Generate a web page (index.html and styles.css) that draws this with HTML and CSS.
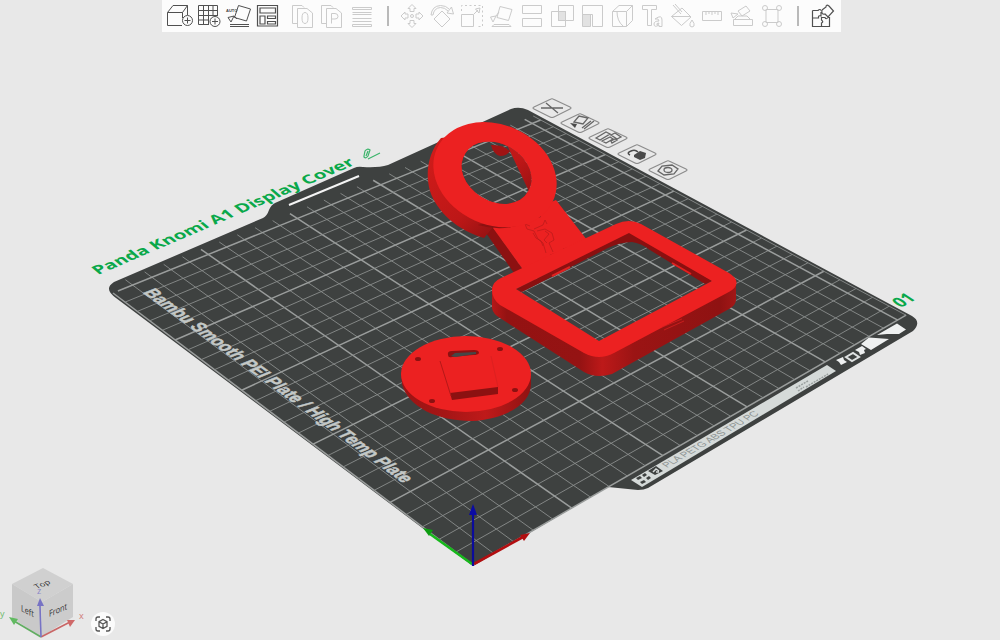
FILE: index.html
```html
<!DOCTYPE html>
<html lang="en">
<head>
<meta charset="utf-8">
<meta name="viewport" content="width=device-width, initial-scale=1">
<title>Panda Knomi A1 Display Cover</title>
<link rel="stylesheet" href="styles.css">
</head>
<body>
<main class="stage">
<svg class="scene" viewBox="0 0 1000 640" role="img" aria-label="Build plate with model parts">
  <defs>
    <linearGradient id="ringSide" x1="0" y1="0" x2="1" y2="1">
      <stop offset="0.1" stop-color="#cf1c1a"/><stop offset="0.55" stop-color="#bd1717"/><stop offset="0.9" stop-color="#7d0f10"/>
    </linearGradient>
    <linearGradient id="frameSide" x1="492" y1="0" x2="737" y2="0" gradientUnits="userSpaceOnUse">
      <stop offset="0" stop-color="#b51818"/><stop offset="0.06" stop-color="#941212"/><stop offset="0.36" stop-color="#951313"/>
      <stop offset="0.45" stop-color="#bd1919"/><stop offset="0.58" stop-color="#9b1414"/><stop offset="0.93" stop-color="#8f1212"/><stop offset="1" stop-color="#a51717"/>
    </linearGradient>
    <linearGradient id="discSide" x1="0" x2="1">
      <stop offset="0" stop-color="#9c1414"/><stop offset="0.35" stop-color="#a51616"/><stop offset="0.65" stop-color="#bf1a1a"/><stop offset="1" stop-color="#8f1212"/>
    </linearGradient>
  </defs>

  <path class="plate" d="M473 566 L116 298 Q103 289 114 282 L263 218 Q267 216 269 210 Q271 205 275 203 L354 168 Q358 166 363 167 Q378 168 388 165 L511 109 Q519 106 528 110 L912 316 Q922 322 913 331 L648 488 Q644 490 638 490 L608 487 Z"/>
  <g id="grid"></g>
  <path class="slit" d="M289 205 L359 176"/>

  <path class="strip" d="M631 480 L827 365 L836 371 L642 487 Z"/>
  <g class="strip-mark">
    <path class="mark-white" d="M877 335 L897 323.500 L906 329.500 L899 334 L887 334 Z M861 344 L869 337.500 L889 339 L871 350 Z"/>
    <path class="mark-white" d="M836 360 L843 357 L844 360 L847 362 L841 365 L839 362 Z M855 350 L862 346 L866 349 L864 350 L865 353 L860 355 L859 352 Z"/>
    <path class="mark-outline" d="M846 357 L853 353 L859 357 L852 361 Z"/>
    <path class="mark-dark" d="M636 478 l4 -2 l2 2 l-4 2z M642 475 l3 -2 l2 2 l-3 2z M640 482 l4 -2 l2 2 l-4 2z M646 478 l3 -2 l2 2 l-3 2z M648 471 l8 -5 l7 5 l-8 4z"/>
    <path class="mark-light" d="M653 472 l3 -3 l3 2 M656 472 l3 0"/>
    <path class="tiny" d="M796 388 L808 381 M798 391 L804 387 M806 387 L828 374"/>
  </g>
  <text class="material" transform="matrix(1.69 -0.98 1.73 1.09 667 468)">PLA PETG ABS TPU PC</text>
  <text class="plate-name" transform="matrix(1.41 1.03 -1.7 1 143 293)">Bambu Smooth PEI Plate / High Temp Plate</text>
  <text class="title" transform="matrix(1.7 -0.73 1.15 1 98 275)">Panda Knomi A1 Display Cover</text>
  <text class="title" transform="matrix(1.37 -0.78 1.5 1 901 308)">01</text>

  <!-- neck -->
  <path fill="#8c1111" d="M486 233 L493 227 L524 271 L514 273 Z"/>
  <path fill="#ec2121" d="M493 228 Q495 223 503 222 L556 200 L587 240 L590 246 L524 271 Z"/>
  <g class="engrave">
    <path d="M530 226 l-5 -2 l2 5 l7 2 l4 8 l5 4 l3 10 M534 229 l9 -4 l2 -5 l2 4 M537 231 l8 -2 l7 4 l2 7 l-5 3 l4 9 M545 231 l4 3 l-5 6 l3 3 M533 233 l3 5 l5 3 l2 5"/>
    <path d="M550 255 l10 -3 M563 249 l4 -1 M571 246 l7 -2"/>
  </g>

  <!-- ring -->
  <path fill="url(#ringSide)" fill-rule="evenodd" d="M441 138 C428 153 425 173 430 191 C437 212 457 230 484 238 L493 227 L541 217 L500 130 Z M527.800 191.800 A36.700 27.500 31.400 1 0 465.200 153.600 A36.700 27.500 31.400 1 0 527.800 191.800 Z"/>
  <path fill="#8c1111" d="M478 225 Q508 234 535 218 Q550 208 555 190 L550 188 L530 205 L500 220 Z"/>
  <path fill="#ec2121" fill-rule="evenodd" d="M553.200 200.600 A63.700 50.100 24 1 1 436.800 148.800 A63.700 50.100 24 1 1 553.200 200.600 Z M527.800 191.800 A36.700 27.500 31.400 1 0 465.200 153.600 A36.700 27.500 31.400 1 0 527.800 191.800 Z"/>
  <path fill="#a01414" d="M491 145 Q502 144 510 151 Q507 156 500 156 Q493 154 491 145 Z"/>

  <!-- frame -->
  <path fill="url(#frameSide)" d="M492 287 L492 308 Q493 314 500 318 L584 372 Q596 379 612 374 L729 309 Q736 305 736 300 L736 280 L600 352 Z"/>
  <path fill="#8a1010" d="M516 289 L629 232 L713 281 L705 284 L650 250 Q641 243 632 242 Q620 242 608 248 L522 292 Z"/>
  <path fill="#ec2121" fill-rule="evenodd" d="M492 290 Q492 282 501 278 L616 224 Q629 218 641 224 L729 273 Q740 280 735 287 Q733 290 727 293 L614 353 Q599 361 584 353 L500 305 Q492 299 492 290 Z M516 289 L599 341 L712 281 L629 233 Z"/>
  <path class="slot-edge" d="M552 276 L570 267 M672 263 L691 274"/>
  <path class="slot-line" d="M662 327 L682 319 M664 330 L684 321"/>

  <!-- disc -->
  <path fill="url(#discSide)" d="M401 372 L402 384 C408 407 437 421 472 421 C506 419 531 404 531 384 L531 374 Z"/>
  <ellipse fill="#ec2121" cx="466" cy="374" rx="65" ry="38"/>
  <g fill="#8c1111">
    <ellipse cx="418" cy="359" rx="3" ry="2"/><ellipse cx="500" cy="349" rx="3" ry="2"/>
    <ellipse cx="515" cy="390" rx="3" ry="2"/><ellipse cx="432" cy="401" rx="3" ry="2"/>
    <path d="M448 355 Q447 351 452 351 L474 350 Q479 350 479 353 Q478 355 473 355 L452 357 Q448 358 448 355 Z"/>
    <path d="M450 393 L498 387 L498 394 L452 400 Z"/>
  </g>
  <path fill="#454747" d="M451 356 L455 353 L476 352 L476 354 L455 357 Z"/>
  <path fill="none" stroke="#b51818" d="M440 361 L451 396"/>
  <path fill="none" stroke="#dc2020" d="M491 356 L498 387"/>

  <!-- origin axes -->
  <path stroke="#17b81c" stroke-width="2.600" d="M472 564 L430 534"/>
  <path fill="#0c9c10" d="M423 528 L433 530 L429 536 Z"/>
  <path stroke="#b20e10" stroke-width="2.600" d="M474 564 L523 537"/>
  <path fill="#b20e10" d="M530 533 L520 535 L524 541 Z"/>
  <path stroke="#0b0b9c" stroke-width="2.200" d="M473 566 L473 514"/>
  <path fill="#0b0ba4" d="M473 504 L477 515 L469 515 Z"/>

  <!-- view cube -->
  <path fill="#d0d0d0" d="M12 584 L43 568 L73 584 L42 602 Z"/>
  <path fill="#c9c9c9" d="M12 584 L42 602 L41 637 L12 618 Z"/>
  <path fill="#cccccc" d="M42 602 L73 584 L73 617 L41 637 Z"/>
  <text class="face" transform="matrix(0.9 -0.35 0.6 0.6 37 589)">Top</text>
  <text class="face" transform="matrix(0.8 0.4 0 1 21 611)">Left</text>
  <text class="face" transform="matrix(0.8 -0.35 0 1 49 617)">Front</text>
  <g fill="none" stroke-width="1.600">
    <path stroke="#61ad61" d="M41 637 L14 621"/><path stroke="#c96666" d="M41 637 L70 622"/><path stroke="#7773c4" d="M41 637 L40 606"/>
  </g>
  <path fill="#61ba61" d="M9 617 L18 619 L14 625 Z"/>
  <path fill="#cf6969" d="M75 620 L67 620 L70 627 Z"/>
  <path fill="#7773c4" d="M40 598 L44 606 L37 606 Z"/>
  <text class="axis axis-x" x="79" y="619">x</text>
  <text class="axis axis-y" x="0" y="617">y</text>
  <text class="axis axis-z" x="37" y="594">z</text>
</svg>

<button class="plate-btn edit" aria-label="Rename plate"><svg viewBox="0 0 20 14"><path d="M3 9 L4 4 Q6 1 9 3 L7 9 Q5 12 3 10 Z M5 9 L7 4 M7 12 L19 6"/></svg></button>
<button class="plate-btn b1" aria-label="Delete all"><svg viewBox="-20 -10 40 20"><path d="M-18 -1 L-1 -9 Q0 -9.500 1 -9 L18 -1 Q20 0 18 1 L2 9 Q0 10 -2 9 L-18 1 Q-20 0 -18 -1 Z"/><path class="dark" d="M-11 0 L11 0 M-6 -5 L6 5"/></svg></button>
<button class="plate-btn b2" aria-label="Auto orient"><svg viewBox="-20 -10 40 20"><path d="M-18 -1 L-1 -9 Q0 -9.500 1 -9 L18 -1 Q20 0 18 1 L2 9 Q0 10 -2 9 L-18 1 Q-20 0 -18 -1 Z"/><path class="dark" d="M-6 -1 L-1 -7 L8 -5 L3 1 Z M4 6 L14 -2 M2 5 L11 -2"/><path class="solid" d="M-10 0 L-3 1 L-5 5 Z"/></svg></button>
<button class="plate-btn b3" aria-label="Arrange"><svg viewBox="-20 -10 40 20"><path d="M-18 -1 L-1 -9 Q0 -9.500 1 -9 L18 -1 Q20 0 18 1 L2 9 Q0 10 -2 9 L-18 1 Q-20 0 -18 -1 Z"/><path class="dark" d="M-12 0 L-2 -6 L2 -4 L-8 2 Z M-6 3 L2 -1 L5 1 L-2 5 Z M3 -3 L7 -5 L13 -1 L9 1 Z M3 3 L7 1 L9 2 L4 5 Z"/></svg></button>
<button class="plate-btn b4" aria-label="Lock plate"><svg viewBox="-20 -10 40 20"><path d="M-18 -1 L-1 -9 Q0 -9.500 1 -9 L18 -1 Q20 0 18 1 L2 9 Q0 10 -2 9 L-18 1 Q-20 0 -18 -1 Z"/><path class="lock" d="M-7 1 Q-11 -1 -6 -3 Q-2 -5 1 -2"/><path class="solid" d="M-3 1 L3 -3 L9 -1 L8 4 L3 6 L-3 3 Z"/></svg></button>
<button class="plate-btn b5" aria-label="Plate settings"><svg viewBox="-20 -10 40 20"><path d="M-18 -1 L-1 -9 Q0 -9.500 1 -9 L18 -1 Q20 0 18 1 L2 9 Q0 10 -2 9 L-18 1 Q-20 0 -18 -1 Z"/><path class="dark" d="M-10 1 L-6 -4 L4 -5 L10 -1 L6 4 L-4 5 Z"/><ellipse class="dark" rx="4" ry="2.500"/></svg></button>
<button class="fit-view" aria-label="Fit camera to scene"><svg viewBox="0 0 24 24"><path d="M5 9 V7 Q5 5 7 5 H9 M15 5 H17 Q19 5 19 7 V9 M19 15 V17 Q19 19 17 19 H15 M9 19 H7 Q5 19 5 17 V15"/><path d="M12 7.500 L16 9.700 V14.300 L12 16.500 L8 14.300 V9.700 Z M8 9.700 L12 12 L16 9.700 M12 12 V16.500"/></svg></button>
</main>

<header class="toolbar-row">
<div class="toolbar" role="toolbar" aria-label="Tools">
  <div class="group tight">
    <button aria-label="Add"><svg viewBox="0 0 28 28"><path d="M16 23.500 H1.500 V10.500 H16.500 V16 M1.500 10.500 L7 3.500 H21.500 V13 M16.500 10.500 L21.500 3.500"/><circle cx="21.500" cy="18.500" r="5"/><path d="M18.500 18.500 H24.500 M21.500 15.500 V21.500"/></svg></button>
    <button aria-label="Add plate"><svg viewBox="0 0 28 28"><path d="M14 22.500 H3.500 V3.500 H22.500 V14 M3.500 8.500 H22.500 M3.500 13.500 H22.500 M3.500 18 H14 M8.500 3.500 V22.500 M13.500 3.500 V22.500 M18 3.500 V14"/><circle cx="20" cy="19.500" r="5"/><path d="M17 19.500 H23 M20 16.500 V22.500"/></svg></button>
    <button aria-label="Auto orient"><svg viewBox="0 0 28 28"><path d="M14.500 3.500 L26.500 7 L22.500 19 L10.500 15.500 Z M4 15.500 L10 14 L7 20 Z M10 14 L13 17 M6 24.500 H25 M6 22.500 H25"/><text class="auto" x="2" y="10">AUTO</text></svg></button>
    <button aria-label="Arrange"><svg viewBox="0 0 28 28"><path class="mid" d="M4.500 3.500 H24.500 V24 H4.500 Z M7 6 H22.500 V11 H7 Z M7 14 H12 V22 H7 Z M14.500 14 H22.500 V16.500 H14.500 Z M14.500 19.500 H22.500 V22 H14.500 Z"/></svg></button>
  </div>
  <div class="group off">
    <button disabled aria-label="Split to objects"><svg viewBox="0 0 28 28"><path d="M9 21.500 H4.500 V3.500 H14 L16 5.500 M9.500 6.500 H19 L24.500 11 V25.500 H9.500 Z M17 10.500 Q20 10.500 20 16 Q20 21.500 17 21.500 Q14 21.500 14 16 Q14 10.500 17 10.500 Z"/></svg></button>
    <button disabled aria-label="Split to parts"><svg viewBox="0 0 28 28"><path d="M8 21.500 H3.500 V3.500 H13 L15 5.500 M8.500 6.500 H18 L23.500 11 V25.500 H8.500 Z M13.500 21.500 V11.500 H17 Q20 11.500 20 14.500 Q20 17 17 17 H13.500"/></svg></button>
    <button disabled aria-label="Variable layer height"><svg viewBox="0 0 28 28"><path d="M4.500 5.500 H23.500 V7.500 H4.500 Z M4.500 10.500 H23.500 M4.500 12.500 H23.500 M4.500 16.500 H23.500 M4.500 19.500 H23.500 M4.500 22.500 H23.500 V24.500 H4.500 Z"/></svg></button>
  </div>
  <span class="sep"></span>
  <div class="group off">
    <button disabled aria-label="Move"><svg viewBox="0 0 28 28"><path d="M14 2.500 L18 6.500 H16 V9.500 H12 V6.500 H10 Z M14 25.500 L18 21.500 H16 V18.500 H12 V21.500 H10 Z M3 14 L7 10 V12 H10 V16 H7 V18 Z M25 14 L21 10 V12 H18 V16 H21 V18 Z"/><circle cx="14" cy="14" r="1.500"/></svg></button>
    <button disabled aria-label="Rotate"><svg viewBox="0 0 28 28"><path d="M14 9 L22 17 L14 25 L6 17 Z M3 13 Q4 4 12.500 3.500 Q18 3.500 21 7 M19 11 L25.500 12 L23.500 5 Z M3 13 H5 Q6 6 12.500 5.500 Q17 5.500 20 9"/></svg></button>
    <button disabled aria-label="Scale"><svg viewBox="0 0 28 28"><path d="M3.500 12.500 H15.500 V24.500 H3.500 Z M16 12 L20 8 M17.500 7 L22 6 L21 11 Z"/><path stroke-dasharray="2 2.500" d="M3.500 9 V3.500 H24.500 V24.500 H18"/></svg></button>
    <button disabled aria-label="Lay on face"><svg viewBox="0 0 28 28"><path d="M12 4.500 L24 7.500 L20.500 18.500 L9 15.500 Z M2.500 15 L8 14 L5 20 Z M8 14 L11 10 M4 24.500 L6 22.500 H21 L23 24.500 Z"/></svg></button>
    <button disabled aria-label="Cut"><svg viewBox="0 0 28 28"><path d="M4.500 11.500 V3.500 H23.500 V11.500 Z M4.500 16.500 H23.500 V24.500 H4.500 Z"/></svg></button>
    <button disabled aria-label="Mesh boolean"><svg viewBox="0 0 28 28"><path class="shade" d="M10.500 9.500 H17.500 V18.500 H10.500 Z"/><path d="M3.500 9.500 H17.500 V24.500 H3.500 Z M10.500 3.500 H25.500 V18.500 H10.500 Z"/></svg></button>
    <button disabled aria-label="Support painting"><svg viewBox="0 0 28 28"><path class="shade" d="M4.500 12.500 H12.500 V24.500 H4.500 Z"/><path d="M4.500 12.500 V3.500 H24.500 V24.500 H14.500 V12.500 Z"/></svg></button>
    <button disabled aria-label="Seam painting"><svg viewBox="0 0 28 28"><path d="M4.500 9.500 H18.500 V24.500 H4.500 Z M4.500 9.500 L11 3.500 H24.500 V18.500 L18.500 24.500 M18.500 9.500 L24.500 3.500 M9 9.500 Q9 19 15 24"/></svg></button>
    <button disabled aria-label="Text shape"><svg viewBox="0 0 28 28"><path d="M4.500 3.500 H18.500 V7.500 H13.500 V23.500 H9.500 V7.500 H4.500 Z M17 17 Q24 12 24 18 V24.500 H21 V23 Q16 26 16 22 Q16 19 21 19 Q21 16 17 17 M21 21 Q18 21 19 23 Q21 23 21 21"/></svg></button>
    <button disabled aria-label="Color painting"><svg viewBox="0 0 28 28"><path d="M3.500 14.500 L14 6 L23 15 L13.500 23.500 Z M3.500 14.500 H23 M5 3 L13 12 M7 2 L14 10 M24 18 Q21 22 22 24 Q24 26 26 24 Q27 22 24 18 Z"/></svg></button>
    <button disabled aria-label="Measure"><svg viewBox="0 0 28 28"><path d="M4.500 9.500 H23.500 V18.500 H4.500 Z M8 10 V13 M11 10 V12 M14 10 V13 M17 10 V12 M20 10 V13"/></svg></button>
    <button disabled aria-label="Assemble"><svg viewBox="0 0 28 28"><path d="M5.500 17.500 H24.500 V23.500 H5.500 Z M10 9 L18 4 L22 9 L14 14 Z M3 11 L10 12 L5 16 Z M7 17 L10 14 H19 L22 17"/></svg></button>
    <button disabled aria-label="Cut connectors"><svg viewBox="0 0 28 28"><path d="M8 7.500 H20 V20.500 H8 Z"/><circle cx="7" cy="6" r="2.500"/><circle cx="21" cy="6" r="2.500"/><circle cx="7" cy="22" r="2.500"/><circle cx="21" cy="22" r="2.500"/></svg></button>
  </div>
  <span class="sep"></span>
  <div class="group">
    <button aria-label="Assembly view"><svg viewBox="0 0 28 28"><path class="mid" d="M4.500 8.500 H10 Q12 6.500 13 8.500 M13 10 V14 Q10 13 10.500 16 H4.500 V8.500 M4.500 16 V24.500 H13.500 V21 Q16 20 13.500 18 V15.500 H17 Q18 18 20 15.500 H21.500 V24.500 H13.500 M14 8 L18 5 Q18 2 21 4 L25.500 9 L20 15 L17 12 Q13 13 14 8"/></svg></button>
  </div>
</div>
</header>
<script src="grid.js"></script>
</body>
</html>
```
FILE: styles.css
```css
* { box-sizing: border-box; }
body {
  margin: 0;
  min-height: 100vh;
  overflow: hidden;
  background: #e8e8e8;
  font-family: "Open Sans", "Liberation Sans", sans-serif;
}
button {
  padding: 0;
  border: 0;
  background: none;
  color: inherit;
}
.toolbar-row {
  position: absolute;
  top: 0;
  left: 0;
  right: 0;
  display: flex;
  justify-content: center;
  padding-left: 3px;
}
.toolbar {
  display: flex;
  align-items: center;
  padding: 0 4px 0 3px;
  background: #fcfcfc;
  color: #505050;
}
.group { display: flex; }
.group.tight { margin-right: 6px; }
.group.off { color: #cbcbcb; }
.group button {
  display: flex;
  align-items: center;
  justify-content: center;
  width: 30px;
  height: 32px;
}
.group.tight button { width: 29px; }
.group svg {
  flex: none;
  width: 28px;
  height: 28px;
  fill: none;
  stroke: currentColor;
  stroke-width: 1;
  overflow: visible;
}
.group .mid { stroke-width: 1.2; }
.group .shade { fill: #e2e2e2; }
.group .auto {
  font: bold 4px "Liberation Sans", sans-serif;
  fill: #444;
  stroke: none;
}
.sep {
  width: 2px;
  height: 20px;
  margin: 0 8px 0 10px;
  background: #b9b9b9;
}
.stage {
  position: relative;
  width: min(100vw, 156.25vh);
  aspect-ratio: 25 / 16;
  margin: 0 auto;
}
.scene {
  display: block;
  width: 100%;
  height: 100%;
}
.plate { fill: #3e4140; }
.line { stroke: #8a8d8c; stroke-width: 0.9; }
.line.major { stroke: #9a9d9c; stroke-width: 1.5; }
.slit { stroke: #f4f4f4; stroke-width: 2; }
.strip { fill: #d5dad9; }
.mark-white { fill: #eef0f0; }
.mark-outline { fill: none; stroke: #dfe2e2; stroke-width: 2; }
.mark-dark { fill: #3e4140; }
.mark-light { fill: none; stroke: #d5dad9; stroke-width: 1.5; }
.tiny { stroke: #9aa09f; stroke-width: 1.5; stroke-dasharray: 2 1; }
.material {
  font: 5px "Liberation Sans", sans-serif;
  fill: #8d9392;
}
.plate-name {
  font: italic bold 9px "Liberation Sans", sans-serif;
  fill: #c3c8c7;
  stroke: #c3c8c7;
  stroke-width: 0.3;
}
.title {
  font: bold 10px "Open Sans", sans-serif;
  fill: #0aa84a;
}
.engrave { fill: none; stroke: #b81a1a; stroke-width: 0.7; }
.slot-edge { stroke: #e02020; stroke-width: 2; }
.slot-line { stroke: #d42020; stroke-width: 0.8; }
.face {
  font: 9px "Open Sans", sans-serif;
  fill: #333;
}
.axis { font: 9px "Open Sans", sans-serif; }
.axis-x { fill: #cf7777; }
.axis-y { fill: #6cb86c; }
.axis-z { fill: #8a86c8; }
.plate-btn {
  position: absolute;
  width: 4%;
  transform: translate(-50%, -50%);
}
.plate-btn svg {
  display: block;
  width: 100%;
  fill: none;
  stroke: #8c8c8c;
  stroke-width: 1.2;
}
.plate-btn .dark { stroke: #666; stroke-width: 1.3; }
.plate-btn .solid { fill: #4a4a4a; stroke: none; }
.plate-btn .lock { stroke: #4a4a4a; stroke-width: 1.6; }
.plate-btn.edit { left: 37.1%; top: 24%; width: 2%; }
.plate-btn.edit svg { stroke: #3db56c; }
.b1 { left: 55.2%; top: 16.9%; }
.b2 { left: 58%; top: 19.2%; }
.b3 { left: 60.8%; top: 21.6%; }
.b4 { left: 63.7%; top: 24.1%; }
.b5 { left: 66.8%; top: 26.6%; }
.fit-view {
  position: absolute;
  left: 91px;
  bottom: 4px;
  width: 24px;
  height: 24px;
  border-radius: 50%;
  background: #fbfbfb;
}
.fit-view svg {
  display: block;
  width: 24px;
  height: 24px;
  fill: none;
  stroke: #555;
  stroke-width: 1.3;
}
```
FILE: grid.js
```js
// Projects plate coordinates (in units of 50 mm) to the drawing.
function project(u, v) {
  const d = 1 + 0.0425 * u + 0.0397 * v;
  return [473 + (103 * u - 86.3 * v) / d, 565 - (59.4 * u + 65.2 * v) / d];
}

const grid = document.getElementById("grid");
const END = 5.12;

function addLine(from, to, major) {
  const [x1, y1] = project(...from);
  const [x2, y2] = project(...to);
  const line = document.createElementNS("http://www.w3.org/2000/svg", "line");
  Object.entries({ x1, y1, x2, y2 }).forEach(([k, n]) => line.setAttribute(k, n.toFixed(2)));
  line.setAttribute("class", major ? "line major" : "line");
  grid.append(line);
}

for (let i = 0; i <= 25; i++) {
  const t = i / 5;
  addLine([t, 0], [t, i === 0 ? 5 : END], i % 5 === 0);
  addLine([i === 25 ? 0.05 : 0, t], [END, t], i % 5 === 0);
}
addLine([END, 0], [END, END], false);
```
